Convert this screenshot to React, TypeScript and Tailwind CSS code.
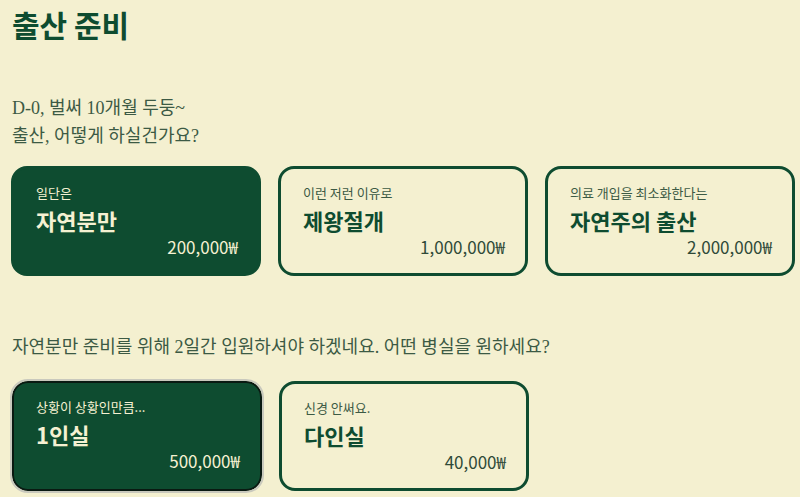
import React from "react";

type Opt = { sub: string; title: string; price: string; selected?: boolean; ring?: boolean };

function Card({ o }: { o: Opt }) {
  const base =
    "flex flex-none flex-col w-[250px] h-[110px] rounded-[16px] pl-[22px] pr-[20px] pt-[15px] box-border";
  if (o.selected) {
    return (
      <div
        className={
          base +
          (o.ring
            ? " bg-[#0e4c30] border-[2px] border-[#0a1a12] outline outline-[2px] outline-[#c9c9bd] text-[#f5f1d2]"
            : " bg-[#0e4c30] border-[3px] border-[#0e4c30] text-[#f5f1d2]")
        }
      >
        <div className="text-[13px] leading-[18px]">{o.sub}</div>
        <div className="text-[22px] font-bold leading-[30px] mt-[3px]">{o.title}</div>
        <div className="text-[17px] leading-[22px] text-right mt-[1px]">{o.price}</div>
      </div>
    );
  }
  return (
    <div className={base + " border-[3px] border-[#0e4c30] text-[#0e4c30]"}>
      <div className="text-[13px] leading-[18px] text-[#3c5a44]">{o.sub}</div>
      <div className="text-[22px] font-bold leading-[30px] mt-[3px]">{o.title}</div>
      <div className="text-[17px] leading-[22px] text-right mt-[1px] text-[#2f4a38]">{o.price}</div>
    </div>
  );
}

export default function App() {
  const row1: Opt[] = [
    { sub: "일단은", title: "자연분만", price: "200,000₩", selected: true },
    { sub: "이런 저런 이유로", title: "제왕절개", price: "1,000,000₩" },
    { sub: "의료 개입을 최소화한다는", title: "자연주의 출산", price: "2,000,000₩" },
  ];
  const row2: Opt[] = [
    { sub: "상황이 상황인만큼...", title: "1인실", price: "500,000₩", selected: true, ring: true },
    { sub: "신경 안써요.", title: "다인실", price: "40,000₩" },
  ];
  return (
    <div
      className="w-[800px] h-[497px] overflow-hidden bg-[#f4f0d0] pl-[11px] box-border"
      style={{ fontFamily: '"Noto Sans CJK KR", "Noto Sans", sans-serif' }}
    >
      <h1 className="text-[30px] font-bold text-[#0e4c30] leading-[40px] pt-[4px] pl-[1px]">출산 준비</h1>
      <div
        className="mt-[50px] text-[18px] leading-[28px] text-[#3c5a44] pl-[1px]"
        style={{ fontFamily: '"Liberation Serif", "Noto Sans CJK KR", serif' }}
      >
        <p>D-0, 벌써 10개월 두둥~</p>
        <p>출산, 어떻게 하실건가요?</p>
      </div>
      <div className="flex gap-[17px] mt-[16px]">
        {row1.map((o) => (
          <Card key={o.title} o={o} />
        ))}
      </div>
      <p
        className="mt-[57px] text-[18px] leading-[28px] text-[#3c5a44] pl-[1px]"
        style={{ fontFamily: '"Liberation Serif", "Noto Sans CJK KR", serif' }}
      >
        자연분만 준비를 위해 2일간 입원하셔야 하겠네요. 어떤 병실을 원하세요?
      </p>
      <div className="flex gap-[17px] mt-[20px] pl-[1px]">
        {row2.map((o) => (
          <Card key={o.title} o={o} />
        ))}
      </div>
    </div>
  );
}
